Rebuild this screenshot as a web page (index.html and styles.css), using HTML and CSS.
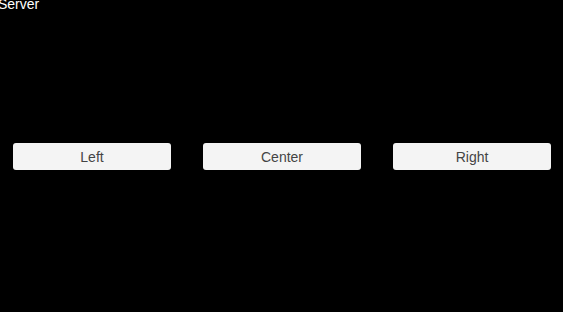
FILE: index.html
```html
<!DOCTYPE html>
<html>
<head>
<meta charset="utf-8">
<link rel="stylesheet" href="styles.css">
</head>
<body>
<div class="label">Server</div>
<div class="row">
  <button class="btn">Left</button>
  <button class="btn">Center</button>
  <button class="btn">Right</button>
</div>
</body>
</html>
```
FILE: styles.css
```css
html, body {
  margin: 0;
  padding: 0;
  background: #000;
  width: 563px;
  height: 312px;
  overflow: hidden;
  font-family: "Liberation Sans", Arial, sans-serif;
}
.label {
  position: absolute;
  left: -2px;
  top: -5px;
  color: #fff;
  font-size: 14px;
  line-height: 18px;
}
.row {
  height: 312px;
  display: flex;
  align-items: center;
  gap: 32px;
  padding: 1px 12px 0 13px;
  box-sizing: border-box;
}
.btn {
  flex: 1;
  height: 27px;
  border: none;
  border-radius: 3px;
  background: #f4f4f4;
  color: #444;
  font-family: "Liberation Sans", Arial, sans-serif;
  font-size: 14px;
  padding: 0;
}
```
